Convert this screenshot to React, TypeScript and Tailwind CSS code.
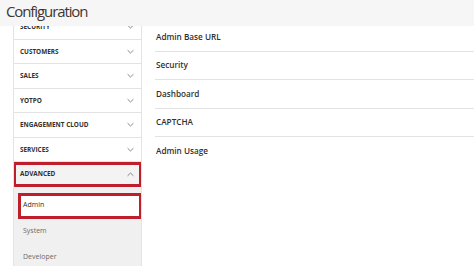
import React from "react";

const Chevron = ({ up = false }: { up?: boolean }) => (
  <svg width="7" height="5" viewBox="0 0 7 5" className="shrink-0">
    <path
      d={up ? "M0.6 3.8 L3.5 1 L6.4 3.8" : "M0.6 1.2 L3.5 4 L6.4 1.2"}
      fill="none"
      stroke="#7a7a7a"
      strokeWidth="0.9"
    />
  </svg>
);

const sections = ["SECURITY", "CUSTOMERS", "SALES", "YOTPO", "ENGAGEMENT CLOUD", "SERVICES"];
const rows = ["Admin Base URL", "Security", "Dashboard", "CAPTCHA", "Admin Usage"];

export default function App() {
  return (
    <div
      className="w-[474px] h-[266px] overflow-hidden bg-white flex flex-col"
      style={{ fontFamily: '"Open Sans", "Liberation Sans", sans-serif' }}
    >
      <div className="h-[26px] shrink-0 bg-[#f6f6f6] flex items-center pl-[6px] relative z-10">
        <span className="text-[15px] leading-none tracking-[-1.1px] text-[#41362f] mt-[-4px]">Configuration</span>
      </div>
      <div className="flex flex-1 min-h-0">
        <div className="w-[13px] shrink-0" />
        <div className="w-[129px] shrink-0 border-l border-r border-[#e3e3e3] flex flex-col overflow-hidden">
          <div className="mt-[-11px] flex flex-col">
            {sections.map((s) => (
              <div
                key={s}
                className="h-[24.5px] shrink-0 border-b border-[#e3e3e3] flex items-center justify-between pl-[6px] pr-[7px]"
              >
                <span className="text-[6.4px] font-bold text-[#303030] mt-[1px]">{s}</span>
                <Chevron />
              </div>
            ))}
            <div className="h-[24.5px] shrink-0 border-[3px] border-[#bf1e2d] bg-[#f3f3f3] flex items-center justify-between pl-[4px] pr-[5px] ml-[-1px] mr-[-1px]">
              <span className="text-[6.4px] font-bold text-[#303030]">ADVANCED</span>
              <Chevron up />
            </div>
            <div className="bg-[#f0f0f0] flex flex-col pt-[6px] pl-[4px]">
              <div className="h-[26px] border-[3px] border-[#bf1e2d] bg-white flex items-center pl-[2px] mr-[-1px]">
                <span className="text-[7px] text-[#303030]">Admin</span>
              </div>
              <div className="h-[26px] flex items-center pl-[5px]">
                <span className="text-[7px] text-[#6a6a6a]">System</span>
              </div>
              <div className="h-[26px] flex items-center pl-[5px]">
                <span className="text-[7px] text-[#6a6a6a]">Developer</span>
              </div>
            </div>
          </div>
        </div>
        <div className="flex-1 pl-[13px] flex flex-col">
          <div className="mt-[-3px] flex flex-col">
            {rows.map((r, i) => (
              <div
                key={r}
                className={`h-[28.5px] shrink-0 flex items-center ${i < rows.length - 1 ? "border-b border-[#e3e3e3]" : ""}`}
              >
                <span className="text-[8.2px] font-semibold text-[#303030] pl-[1px]">{r}</span>
              </div>
            ))}
          </div>
        </div>
      </div>
    </div>
  );
}
